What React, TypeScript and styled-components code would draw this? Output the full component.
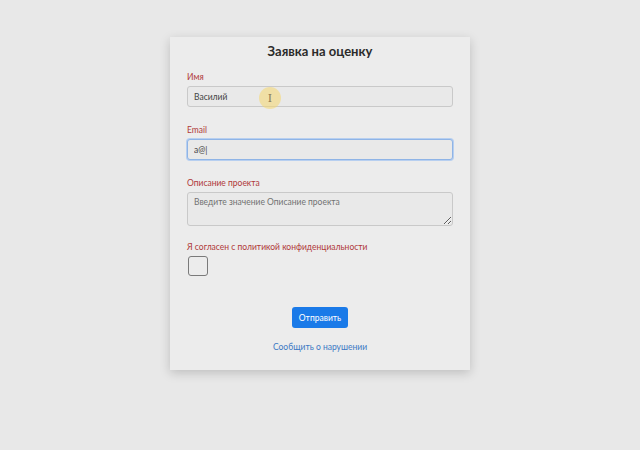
import styled, { createGlobalStyle } from 'styled-components';

const GlobalStyle = createGlobalStyle`
  html, body {
    margin: 0;
    padding: 0;
    background: #e8e8e8;
    font-family: "Lato", "Noto Sans", sans-serif;
  }
`;

const Page = styled.div`
  width: 640px;
  height: 450px;
  display: flex;
  justify-content: center;
  align-items: flex-start;
  padding-top: 37px;
  box-sizing: border-box;
`;

const Card = styled.form`
  position: relative;
  width: 300px;
  box-sizing: border-box;
  padding: 5px 17px 16px 17px;
  background: #ececec;
  box-shadow: 0 3px 10px rgba(0, 0, 0, 0.18);
  display: flex;
  flex-direction: column;
`;

const Title = styled.h2`
  margin: 0 0 11px;
  text-align: center;
  font-size: 13px;
  font-weight: 700;
  color: #2b2b2b;
  line-height: 18px;
`;

const Field = styled.div<{ gap?: number }>`
  display: flex;
  flex-direction: column;
  gap: 2px;
  margin-bottom: ${p => p.gap ?? 17}px;
`;

const Label = styled.label`
  font-size: 8.5px;
  line-height: 13px;
  color: #b03a3a;
`;

const Input = styled.input<{ focused?: boolean }>`
  height: 21px;
  box-sizing: border-box;
  padding: 0 6px;
  font-family: inherit;
  font-size: 8.5px;
  color: #444;
  background: #e9e9e9;
  border: 1px solid ${p => (p.focused ? '#8fb4e6' : '#c9c9c9')};
  box-shadow: ${p => (p.focused ? '0 0 0 1px #b7cff0' : 'none')};
  border-radius: 3px;
  outline: none;
`;

const TextArea = styled.textarea`
  height: 34px;
  box-sizing: border-box;
  padding: 4px 6px;
  font-family: inherit;
  font-size: 8.5px;
  color: #444;
  background: #e9e9e9;
  border: 1px solid #c9c9c9;
  border-radius: 3px;
  resize: vertical;
  outline: none;
  &::placeholder {
    color: #727272;
  }
`;

const Box = styled.span`
  width: 20px;
  height: 20px;
  box-sizing: border-box;
  border: 1px solid #7a7a7a;
  border-radius: 3px;
  background: #ececec;
  margin-left: 1px;
`;

const Actions = styled.div`
  display: flex;
  flex-direction: column;
  align-items: center;
  gap: 13px;
  margin-top: 14px;
`;

const Button = styled.button`
  height: 21px;
  padding: 0 7px;
  font-family: inherit;
  font-size: 8.5px;
  color: #fff;
  background: #1a7ae8;
  border: none;
  border-radius: 3px;
`;

const Link = styled.a`
  font-size: 8.5px;
  line-height: 13px;
  color: #3c79c4;
  text-decoration: none;
`;

const Cursor = styled.div`
  position: absolute;
  left: 89px;
  top: 50px;
  width: 22px;
  height: 22px;
  border-radius: 50%;
  background: rgba(245, 215, 110, 0.55);
  display: flex;
  align-items: center;
  justify-content: center;
  color: #8a7a55;
  font-size: 11px;
  font-family: "DejaVu Serif", serif;
`;

export default function App() {
  return (
    <Page>
      <GlobalStyle />
      <Card onSubmit={e => e.preventDefault()}>
        <Title>Заявка на оценку</Title>
        <Field>
          <Label>Имя</Label>
          <Input defaultValue="Василий" />
        </Field>
        <Field>
          <Label>Email</Label>
          <Input focused defaultValue="a@|" />
        </Field>
        <Field gap={15}>
          <Label>Описание проекта</Label>
          <TextArea placeholder="Введите значение Описание проекта" />
        </Field>
        <Field gap={17}>
          <Label>Я согласен с политикой конфиденциальности</Label>
          <Box />
        </Field>
        <Actions>
          <Button type="submit">Отправить</Button>
          <Link href="#">Сообщить о нарушении</Link>
        </Actions>
        <Cursor>I</Cursor>
      </Card>
    </Page>
  );
}
